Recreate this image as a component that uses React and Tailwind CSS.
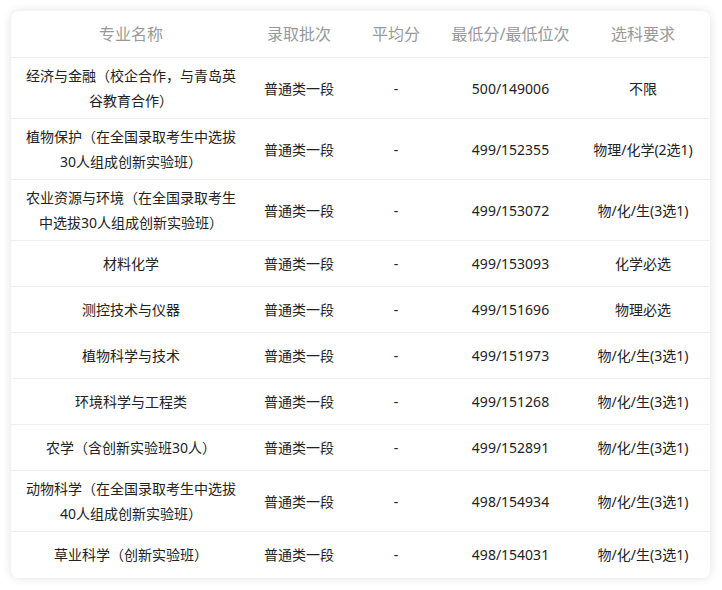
import React from "react";

const rows = [
  ["经济与金融（校企合作，与青岛英谷教育合作）", "普通类一段", "-", "500/149006", "不限"],
  ["植物保护（在全国录取考生中选拔30人组成创新实验班）", "普通类一段", "-", "499/152355", "物理/化学(2选1)"],
  ["农业资源与环境（在全国录取考生中选拔30人组成创新实验班）", "普通类一段", "-", "499/153072", "物/化/生(3选1)"],
  ["材料化学", "普通类一段", "-", "499/153093", "化学必选"],
  ["测控技术与仪器", "普通类一段", "-", "499/151696", "物理必选"],
  ["植物科学与技术", "普通类一段", "-", "499/151973", "物/化/生(3选1)"],
  ["环境科学与工程类", "普通类一段", "-", "499/151268", "物/化/生(3选1)"],
  ["农学（含创新实验班30人）", "普通类一段", "-", "499/152891", "物/化/生(3选1)"],
  ["动物科学（在全国录取考生中选拔40人组成创新实验班）", "普通类一段", "-", "498/154934", "物/化/生(3选1)"],
  ["草业科学（创新实验班）", "普通类一段", "-", "498/154031", "物/化/生(3选1)"],
];

const headers = ["专业名称", "录取批次", "平均分", "最低分/最低位次", "选科要求"];

const grid = "grid grid-cols-[240px_96px_98px_131px_134px]";

export default function App() {
  return (
    <div
      className="w-[722px] h-[590px] bg-white pt-[11px] pl-[11px]"
      style={{ fontFamily: '"Noto Sans", "Noto Sans CJK SC", sans-serif' }}
    >
      <div className="w-[699px] bg-white rounded-[8px] shadow-[0_0_10px_rgba(0,0,0,0.12)] overflow-hidden">
        <div className={`${grid} border-b border-[#ebeef5]`}>
          {headers.map((h) => (
            <div
              key={h}
              className="h-[46px] flex items-center justify-center text-[16px] text-[#999999]"
            >
              {h}
            </div>
          ))}
        </div>
        {rows.map((r, i) => (
          <div
            key={i}
            className={`${grid} ${i < rows.length - 1 ? "border-b border-[#ebeef5]" : "border-b border-white"}`}
          >
            {r.map((c, j) => (
              <div
                key={j}
                className={`min-h-[45px] py-[5px] flex items-center justify-center text-center text-[14px] leading-[25px] text-[#222222] ${j === 0 ? "px-[12px]" : "px-[4px]"}`}
              >
                {c}
              </div>
            ))}
          </div>
        ))}
      </div>
    </div>
  );
}
